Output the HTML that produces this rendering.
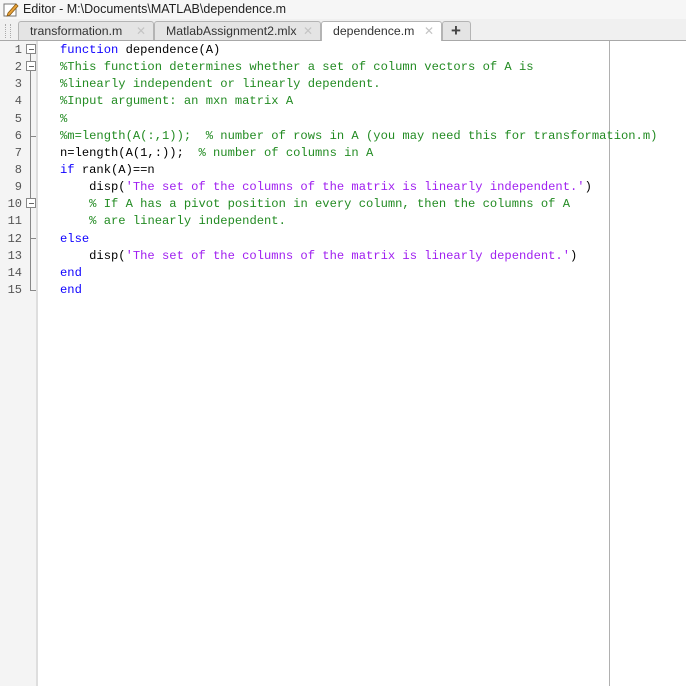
<!DOCTYPE html>
<html><head><style>
body{margin:0;width:686px;height:686px;overflow:hidden;background:#fff;position:relative;font-family:"Liberation Sans",sans-serif}
.title{position:absolute;left:0;top:0;width:686px;height:19px;background:#f6f6f6;font-size:12.5px;color:#222}
.title span{position:absolute;left:23px;top:2px}
.tabs{position:absolute;left:0;top:19px;width:686px;height:21px;background:#f0f0f0;border-bottom:1px solid #a8a8a8}
.tab{position:absolute;top:2px;height:19px;background:#e4e4e4;border:1px solid #b4b4b4;border-bottom:none;border-radius:3px 3px 0 0;font-size:12.3px;color:#333;box-sizing:border-box;padding:2px 0 0 11px}
.tab .x{position:absolute;right:7px;top:2px;color:#c4c4c4;font-size:12px}
.gut{position:absolute;left:0;top:41px;width:36px;height:645px;background:#f4f4f4;border-right:2px solid #dedede}
.ln{position:absolute;left:0;width:22px;text-align:right;font-family:"Liberation Mono",monospace;font-size:12px;color:#555}
.code{position:absolute;left:60px;top:42px;font-family:"Liberation Mono",monospace;font-size:12.15px;line-height:17.14px;white-space:pre;color:#000}
.k{color:#0e00ff}.c{color:#228b22}.s{color:#a020f0}
.fb{position:absolute;left:26px;width:8px;height:8px;border:1px solid #888;background:#fff}
.fb:after{content:"";position:absolute;left:2px;top:4px;width:5px;height:1px;background:#666}
</style></head><body>
<div class="title"><svg style="position:absolute;left:3px;top:2px" width="16" height="15"><rect x="1" y="2" width="12" height="12" fill="#fff" stroke="#777"/><path d="M5 11 L13 2 L15 4 L7 13 L4 14 Z" fill="#e8a23a" stroke="#8a5a10" stroke-width=".8"/></svg><span>Editor - M:\Documents\MATLAB\dependence.m</span></div>
<div class="tabs">
<div style="position:absolute;left:5px;top:5px;width:4px;height:14px;border-left:1px dotted #aaa;border-right:1px dotted #aaa"></div>
<div class="tab" style="left:18px;width:136px">transformation.m<span class="x">✕</span></div>
<div class="tab" style="left:154px;width:167px">MatlabAssignment2.mlx<span class="x">✕</span></div>
<div class="tab" style="left:321px;width:121px;background:#fff;height:20px">dependence.m<span class="x">✕</span></div>
<div class="tab" style="left:442px;width:29px;padding:0 0 0 8px;font-size:17px;font-weight:bold;color:#444;line-height:17px">+</div>
</div>
<div class="gut"></div>
<div style="position:absolute;left:30px;top:53px;width:1px;height:237px;background:#888"></div>
<div style="position:absolute;left:30px;top:290px;width:6px;height:1px;background:#888"></div>
<div style="position:absolute;left:30px;top:136px;width:6px;height:1px;background:#888"></div>
<div style="position:absolute;left:30px;top:238px;width:6px;height:1px;background:#888"></div>
<div class="fb" style="top:44px"></div><div class="fb" style="top:61px"></div><div class="fb" style="top:198px"></div>
<div style="position:absolute;left:609px;top:41px;width:1px;height:645px;background:#b0b0b0"></div>
<div class="ln" style="top:42px;line-height:17.14px">1<br>2<br>3<br>4<br>5<br>6<br>7<br>8<br>9<br>10<br>11<br>12<br>13<br>14<br>15</div>
<div class="code"><span class="k">function</span> dependence(A)
<span class="c">%This function determines whether a set of column vectors of A is</span>
<span class="c">%linearly independent or linearly dependent.</span>
<span class="c">%Input argument: an mxn matrix A</span>
<span class="c">%</span>
<span class="c">%m=length(A(:,1));  % number of rows in A (you may need this for transformation.m)</span>
n=length(A(1,:));  <span class="c">% number of columns in A</span>
<span class="k">if</span> rank(A)==n
    disp(<span class="s">'The set of the columns of the matrix is linearly independent.'</span>)
    <span class="c">% If A has a pivot position in every column, then the columns of A</span>
    <span class="c">% are linearly independent.</span>
<span class="k">else</span>
    disp(<span class="s">'The set of the columns of the matrix is linearly dependent.'</span>)
<span class="k">end</span>
<span class="k">end</span></div>
</body></html>
